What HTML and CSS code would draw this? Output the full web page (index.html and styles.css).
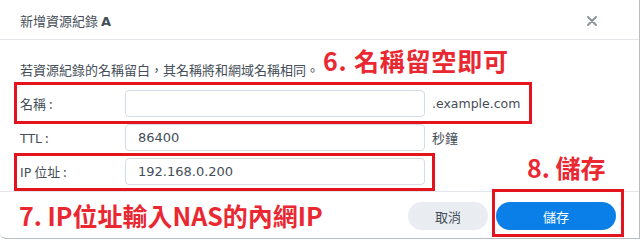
FILE: index.html
```html
<!DOCTYPE html>
<html lang="zh-Hant">
<head>
<meta charset="utf-8">
<link rel="stylesheet" href="styles.css">
</head>
<body>
<div class="dialog">
  <div class="header">
    <span class="title">新增資源紀錄 <b>A</b></span>
    <span class="close">
      <svg width="10" height="10" viewBox="0 0 10 10"><path d="M1 1L9 9M9 1L1 9" stroke="#8a9099" stroke-width="1.8" stroke-linecap="round"/></svg>
    </span>
  </div>
  <div class="body">
    <p class="desc">若資源紀錄的名稱留白，其名稱將和網域名稱相同。</p>
    <div class="form">
      <label class="label">名稱 :</label>
      <div class="input"></div>
      <span class="suffix latin">.example.com</span>

      <label class="label"><span class="latin">TTL</span> :</label>
      <div class="input latin">86400</div>
      <span class="suffix">秒鐘</span>

      <label class="label"><span class="latin">IP</span> 位址 :</label>
      <div class="input latin">192.168.0.200</div>
      <span class="suffix"></span>
    </div>
  </div>
  <div class="footer">
    <button class="btn cancel">取消</button>
    <button class="btn save">儲存</button>
  </div>

  <div class="note note6">6. 名稱留空即可</div>
  <div class="note note7">7. IP位址輸入NAS的內網IP</div>
  <div class="note note8">8. 儲存</div>
  <div class="box box1"></div>
  <div class="box box2"></div>
  <div class="box box3"></div>
</div>
</body>
</html>
```
FILE: styles.css
```css
* { box-sizing: border-box; }
html, body { margin: 0; padding: 0; background: #ffffff; }
body {
  font-family: "Noto Sans CJK TC", "Noto Sans", sans-serif;
  color: #454e58;
}
.dialog {
  position: relative;
  width: 640px;
  height: 239px;
  background: #fff;
  border-right: 1px solid #b9bec4;
  border-bottom: 1px solid #b9bec4;
  border-bottom-left-radius: 6px;
  overflow: hidden;
}
.header {
  height: 40px;
  border-bottom: 1px solid #e3e6ea;
  display: flex;
  align-items: center;
  justify-content: space-between;
  padding: 0 42px 0 20px;
}
.title {
  font-size: 13px;
  color: #454e58;
  padding-top: 1px;
}
.title b { font-family: "DejaVu Sans", sans-serif; font-size: 13px; }
.close { display: flex; padding-top: 2px; }
.body {
  padding: 20px 0 6px 20px;
}
.desc {
  margin: 0 0 10px 0;
  font-size: 13px;
  line-height: 20px;
  color: #454e58;
}
.latin { font-family: "DejaVu Sans", sans-serif; }
.form {
  display: grid;
  grid-template-columns: 105px 300px auto;
  grid-auto-rows: 27px;
  row-gap: 7px;
  align-items: center;
}
.label {
  font-size: 13px;
  color: #454e58;
}
.label .latin { font-size: 12.5px; }
.input {
  height: 27px;
  border: 1px solid #d4dce6;
  border-radius: 4px;
  padding: 0 12px;
  display: flex;
  align-items: center;
  font-size: 13px;
  color: #454e58;
}
.suffix {
  font-size: 13px;
  padding-left: 7px;
  color: #454e58;
}
.suffix.latin { font-size: 12.5px; }
.footer {
  border-top: 1px solid #e3e6ea;
  display: flex;
  justify-content: flex-end;
  gap: 8px;
  padding: 10px 23px 0 0;
}
.btn {
  height: 28px;
  border: none;
  border-radius: 14px;
  font-family: "Noto Sans CJK TC", sans-serif;
  font-size: 13px;
  padding: 0;
}
.cancel { width: 80px; background: #e9edf2; color: #454e58; }
.save { width: 120px; background: #0a7fe8; color: #fff; }

.note {
  position: absolute;
  font-family: "Noto Sans CJK TC", "Noto Sans", sans-serif;
  font-weight: 700;
  color: #ea2832;
  font-size: 25px;
  line-height: 30px;
  white-space: nowrap;
}
.note6 { left: 323px; top: 45px; letter-spacing: 0.8px; }
.note7 { left: 19px; top: 200px; }
.note8 { left: 527px; top: 152px; }
.box {
  position: absolute;
  border: 3px solid #e4141e;
}
.box1 { left: 14px; top: 82px; width: 518px; height: 42px; }
.box2 { left: 14px; top: 153px; width: 421px; height: 38px; }
.box3 { left: 492px; top: 189px; width: 132px; height: 48px; }
```
